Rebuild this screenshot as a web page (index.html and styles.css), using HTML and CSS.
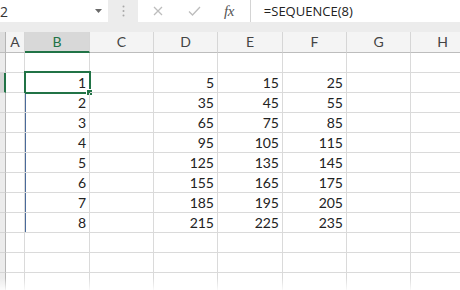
FILE: index.html
```html
<!DOCTYPE html>
<html lang="en">
<head>
<meta charset="UTF-8">
<title>Excel - SEQUENCE</title>
<link rel="stylesheet" href="styles.css">
</head>
<body>

<div class="app">
    <div class="topbar">
        <div class="namebox">
            <span class="ref">2</span>
            <svg class="arrow" width="7" height="4" viewBox="0 0 7 4"><path d="M0 0H7L3.5 4Z" fill="#6a6a6a"/></svg>
        </div>
        <div class="grip">
            <svg width="3" height="12" viewBox="0 0 3 12"><circle cx="1.5" cy="1.5" r="1" fill="#a8a8a8"/><circle cx="1.5" cy="6" r="1" fill="#a8a8a8"/><circle cx="1.5" cy="10.5" r="1" fill="#a8a8a8"/></svg>
        </div>
        <div class="fxbox">
            <svg class="btn-x" width="10" height="10" viewBox="0 0 10 10"><path d="M1 1L9 9M9 1L1 9" stroke="#bdbdbd" stroke-width="1.3" fill="none"/></svg>
            <svg class="btn-ok" width="13" height="10" viewBox="0 0 13 10"><path d="M1 5.5L4.5 9L12 1" stroke="#bdbdbd" stroke-width="1.3" fill="none"/></svg>
            <span class="fx">fx</span>
            <span class="sep"></span>
            <span class="formula">=SEQUENCE(8)</span>
        </div>
    </div>
    <div class="strip"></div>

    <div class="sheet">
        <!-- cabecalho das colunas -->
        <div class="ch corner"></div>
        <div class="ch">A</div>
        <div class="ch sel">B</div>
        <div class="ch">C</div>
        <div class="ch">D</div>
        <div class="ch">E</div>
        <div class="ch">F</div>
        <div class="ch">G</div>
        <div class="ch">H</div>

        <!-- numeros das linhas ficam fora da janela -->
        <div class="rh"></div><div class="cell"></div><div class="cell"></div><div class="cell"></div><div class="cell"></div><div class="cell"></div><div class="cell"></div><div class="cell"></div><div class="cell"></div>

        <div class="rh sel"></div><div class="cell"></div>
        <div class="cell num b2">1
            <div class="spill"></div>
            <div class="active"></div>
            <div class="handle"></div>
        </div>
        <div class="cell"></div><div class="cell num">5</div><div class="cell num">15</div><div class="cell num">25</div><div class="cell"></div><div class="cell"></div>

        <div class="rh"></div><div class="cell"></div><div class="cell num">2</div><div class="cell"></div><div class="cell num">35</div><div class="cell num">45</div><div class="cell num">55</div><div class="cell"></div><div class="cell"></div>
        <div class="rh"></div><div class="cell"></div><div class="cell num">3</div><div class="cell"></div><div class="cell num">65</div><div class="cell num">75</div><div class="cell num">85</div><div class="cell"></div><div class="cell"></div>
        <div class="rh"></div><div class="cell"></div><div class="cell num">4</div><div class="cell"></div><div class="cell num">95</div><div class="cell num">105</div><div class="cell num">115</div><div class="cell"></div><div class="cell"></div>
        <div class="rh"></div><div class="cell"></div><div class="cell num">5</div><div class="cell"></div><div class="cell num">125</div><div class="cell num">135</div><div class="cell num">145</div><div class="cell"></div><div class="cell"></div>
        <div class="rh"></div><div class="cell"></div><div class="cell num">6</div><div class="cell"></div><div class="cell num">155</div><div class="cell num">165</div><div class="cell num">175</div><div class="cell"></div><div class="cell"></div>
        <div class="rh"></div><div class="cell"></div><div class="cell num">7</div><div class="cell"></div><div class="cell num">185</div><div class="cell num">195</div><div class="cell num">205</div><div class="cell"></div><div class="cell"></div>
        <div class="rh"></div><div class="cell"></div><div class="cell num">8</div><div class="cell"></div><div class="cell num">215</div><div class="cell num">225</div><div class="cell num">235</div><div class="cell"></div><div class="cell"></div>

        <div class="rh"></div><div class="cell"></div><div class="cell"></div><div class="cell"></div><div class="cell"></div><div class="cell"></div><div class="cell"></div><div class="cell"></div><div class="cell"></div>
        <div class="rh"></div><div class="cell"></div><div class="cell"></div><div class="cell"></div><div class="cell"></div><div class="cell"></div><div class="cell"></div><div class="cell"></div><div class="cell"></div>
        <div class="rh"></div><div class="cell"></div><div class="cell"></div><div class="cell"></div><div class="cell"></div><div class="cell"></div><div class="cell"></div><div class="cell"></div><div class="cell"></div>
    </div>
</div>
<div class="fade"></div>

</body>
</html>
```

FILE: styles.css
```css
body {
    margin: 0;
    padding: 0;
    width: 460px;
    height: 290px;
    overflow: hidden;
    background: #fff;
    position: relative;
    font-family: Lato, "Liberation Sans", sans-serif;
}

/* a janela esta cortada: cabecalho das linhas quase todo fora */
.app {
    margin-left: -20px;
    width: 480px;
    overflow: hidden;
}

.topbar {
    display: flex;
    height: 22px;
    background: #ececec;
}

.namebox {
    width: 128px;
    background: #fff;
    display: flex;
    align-items: center;
    padding-left: 20px;
    box-sizing: border-box;
    font-family: "Open Sans", sans-serif;
    font-size: 14px;
    color: #333;
}

.namebox .ref {
    flex: 1;
}

.namebox .arrow {
    margin-right: 6px;
}

.grip {
    width: 30px;
    display: flex;
    align-items: center;
    justify-content: center;
}

.fxbox {
    flex: 1;
    background: #fff;
    display: flex;
    align-items: center;
}

.btn-x {
    margin-left: 15px;
}

.btn-ok {
    margin-left: 25px;
}

.fx {
    margin-left: 23px;
    font-family: "Liberation Serif", serif;
    font-style: italic;
    font-size: 15px;
    color: #555;
    letter-spacing: -0.5px;
}

.sep {
    width: 1px;
    height: 22px;
    background: #d4d4d4;
    margin-left: 16px;
}

.formula {
    margin-left: 13px;
    font-family: "Open Sans", sans-serif;
    font-size: 13px;
    color: #222;
}

.strip {
    height: 10px;
    background: #ececec;
}

.sheet {
    display: grid;
    grid-template-columns: 26px 19px 65px 64px 64px 65px 64px 64px 64px;
    grid-template-rows: 21px;
    grid-auto-rows: 20px;
    font-size: 14px;
    color: #222;
}

.ch {
    box-sizing: border-box;
    background: #f4f4f4;
    border-right: 1px solid #d6d6d6;
    border-bottom: 1px solid #bdbdbd;
    text-align: center;
    line-height: 20px;
    color: #444;
}

.ch.corner {
    background: #dedede;
    border-right: 1px solid #b5b5b5;
}

.ch.sel {
    background: #d8d8d8;
    color: #217346;
    border-bottom: 2px solid #217346;
}

.rh {
    box-sizing: border-box;
    background: #ececec;
    border-right: 1px solid #b5b5b5;
    border-bottom: 1px solid #d6d6d6;
}

.rh.sel {
    background: #d4d4d4;
    border-right: 2px solid #217346;
}

.cell {
    box-sizing: border-box;
    border-right: 1px solid #dadada;
    border-bottom: 1px solid #dadada;
    line-height: 19px;
    position: relative;
}

.num {
    text-align: right;
    padding-right: 3px;
}

.spill {
    position: absolute;
    left: 0;
    top: -1px;
    width: 65px;
    height: 161px;
    box-sizing: border-box;
    border: 1px solid #4a6a9a;
    pointer-events: none;
}

.active {
    position: absolute;
    left: -1px;
    top: -2px;
    width: 67px;
    height: 23px;
    box-sizing: border-box;
    border: 2px solid #217346;
}

.handle {
    position: absolute;
    left: 61px;
    top: 16px;
    width: 7px;
    height: 7px;
    box-sizing: border-box;
    background: #217346;
    border: 1px solid #fff;
}

.fade {
    position: absolute;
    left: 0;
    right: 0;
    bottom: 0;
    height: 12px;
    background: linear-gradient(rgba(255, 255, 255, 0), rgba(255, 255, 255, 0.85));
}
```
